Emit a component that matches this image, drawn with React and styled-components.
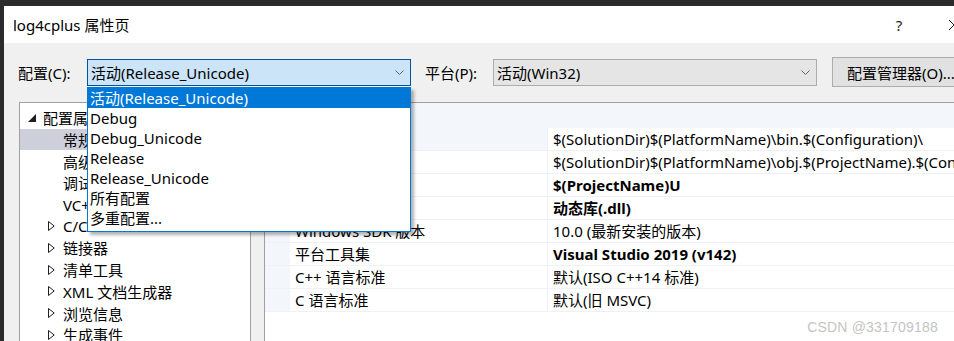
import React from "react";
import styled, { createGlobalStyle } from "styled-components";

const FONT = `"Noto Sans", "Noto Sans CJK SC", sans-serif`;

const CONFIGS = [
  "活动(Release_Unicode)",
  "Debug",
  "Debug_Unicode",
  "Release",
  "Release_Unicode",
  "所有配置",
  "多重配置...",
];

const TREE = [
  { label: "配置属性", depth: 0, open: true },
  { label: "常规", depth: 1, selected: true },
  { label: "高级", depth: 1 },
  { label: "调试", depth: 1 },
  { label: "VC++ 目录", depth: 1 },
  { label: "C/C++", depth: 1, closed: true },
  { label: "链接器", depth: 1, closed: true },
  { label: "清单工具", depth: 1, closed: true },
  { label: "XML 文档生成器", depth: 1, closed: true },
  { label: "浏览信息", depth: 1, closed: true },
  { label: "生成事件", depth: 1, closed: true },
];

const PROPS = [
  { name: "输出目录", value: "$(SolutionDir)$(PlatformName)\\bin.$(Configuration)\\", active: true },
  { name: "中间目录", value: "$(SolutionDir)$(PlatformName)\\obj.$(ProjectName).$(Configuration)\\" },
  { name: "目标文件名", value: "$(ProjectName)U", bold: true },
  { name: "配置类型", value: "动态库(.dll)", bold: true },
  { name: "Windows SDK 版本", value: "10.0 (最新安装的版本)" },
  { name: "平台工具集", value: "Visual Studio 2019 (v142)", bold: true },
  { name: "C++ 语言标准", value: "默认(ISO C++14 标准)" },
  { name: "C 语言标准", value: "默认(旧 MSVC)" },
];

const GlobalStyle = createGlobalStyle`
  html, body {
    margin: 0;
    padding: 0;
    background: #2b2b2b;
    overflow: hidden;
  }
  * { box-sizing: border-box; }
`;

const Window = styled.div`
  margin: 6px 0 0 4px;
  height: 335px;
  display: flex;
  flex-direction: column;
  font-family: ${FONT};
  font-size: 15px;
  color: #000;
  overflow: hidden;
  position: relative;
`;

const TitleBar = styled.div`
  height: 37px;
  flex: none;
  background: #fff;
  display: flex;
  align-items: center;
  padding-left: 9px;
`;

const Title = styled.span`
  flex: 1;
  font-size: 15px;
`;

const TitleBtn = styled.span`
  width: 94px;
  text-align: center;
  font-size: 15px;
  color: #1b1b1b;
`;

const CloseBtn = styled.span`
  width: 8px;
  display: flex;
  align-items: center;
  padding-left: 2px;
  overflow: hidden;
`;

const Body = styled.div`
  flex: 1;
  background: #f0f0f0;
  display: flex;
  flex-direction: column;
  min-height: 0;
`;

const ConfigRow = styled.div`
  display: flex;
  align-items: center;
  height: 44px;
  padding: 14px 0 0 14px;
  flex: none;
`;

const Label = styled.span`
  width: ${(p) => p.$w}px;
  padding-left: ${(p) => p.$pad || 0}px;
  flex: none;
  white-space: nowrap;
`;

const ComboWrap = styled.div`
  position: relative;
  flex: none;
`;

const Combo = styled.div`
  width: 324px;
  height: 27px;
  display: flex;
  align-items: center;
  padding: 0 6px 0 3px;
  background: ${(p) => (p.$open ? "#cce4f7" : "#e5e5e5")};
  border: 1px solid ${(p) => (p.$open ? "#005499" : "#adadad")};
  white-space: nowrap;
`;

const ComboText = styled.span`
  flex: 1;
`;

const DropList = styled.div`
  position: absolute;
  left: 0;
  top: 28px;
  width: 324px;
  background: #fff;
  border: 1px solid #0078d7;
  box-shadow: 3px 3px 3px rgba(0, 0, 0, 0.3);
  z-index: 5;
  padding-bottom: 3px;
`;

const DropItem = styled.div`
  height: 20px;
  line-height: 20px;
  padding-left: 2px;
  background: ${(p) => (p.$active ? "#0078d7" : "transparent")};
  color: ${(p) => (p.$active ? "#fff" : "#000")};
  white-space: nowrap;
`;

const Button = styled.div`
  margin-left: 15px;
  width: 140px;
  height: 30px;
  flex: none;
  background: #e1e1e1;
  border: 1px solid #adadad;
  border-right: none;
  display: flex;
  align-items: center;
  padding-left: 14px;
  white-space: nowrap;
`;

const Main = styled.div`
  flex: 1;
  display: flex;
  margin: 15px 0 0 15px;
  min-height: 0;
`;

const Tree = styled.div`
  width: 232px;
  flex: none;
  background: #fff;
  border: 1px solid #a0a0a0;
  border-bottom: none;
  padding-top: 4px;
`;

const TreeRow = styled.div`
  height: 21.7px;
  display: flex;
  align-items: center;
  padding-left: ${(p) => (p.$depth === 0 ? 8 : 28)}px;
  background: ${(p) => (p.$selected ? "#cdd0db" : "transparent")};
  white-space: nowrap;
`;

const Expander = styled.span`
  width: 15px;
  flex: none;
  display: flex;
  align-items: center;
`;

const Grid = styled.div`
  flex: 1;
  margin-left: 13px;
  background: #fff;
  border-top: 1px solid #a0a0a0;
  border-left: 1px solid #a0a0a0;
  overflow: hidden;
`;

const GridHeader = styled.div`
  height: 25px;
  background: #f3f6fb;
`;

const GridRow = styled.div`
  display: flex;
  height: 23px;
  border-bottom: 1px solid #eef1f6;
  white-space: nowrap;
`;

const Gutter = styled.div`
  width: 25px;
  flex: none;
  background: #f3f6fb;
`;

const NameCell = styled.div`
  width: 257px;
  flex: none;
  padding-left: 5px;
  line-height: 22px;
  background: ${(p) => (p.$active ? "#f3f6fb" : "transparent")};
`;

const ValueCell = styled.div`
  flex: 1;
  padding-left: 5px;
  line-height: 22px;
  border-left: 1px solid #eef1f6;
  font-weight: ${(p) => (p.$bold ? 700 : 400)};
`;

const Watermark = styled.div`
  position: absolute;
  right: 16px;
  bottom: 6px;
  font-family: "Liberation Sans", sans-serif;
  font-size: 14px;
  color: #c4c4c4;
  letter-spacing: 0.2px;
`;

const Chevron = () => (
  <svg width="9" height="5" viewBox="0 0 9 5">
    <polyline points="0.5,0.5 4.5,4.5 8.5,0.5" fill="none" stroke="#606060" strokeWidth="1" />
  </svg>
);

const OpenGlyph = () => (
  <svg width="8" height="8" viewBox="0 0 8 8">
    <polygon points="8,0 8,8 0,8" fill="#1e1e1e" />
  </svg>
);

const ClosedGlyph = () => (
  <svg width="7" height="10" viewBox="0 0 7 10">
    <polygon points="0.5,0.5 6.2,5 0.5,9.5" fill="none" stroke="#1e1e1e" strokeWidth="1" />
  </svg>
);

export default function App() {
  return (
    <>
      <GlobalStyle />
      <Window>
        <TitleBar>
          <Title>log4cplus 属性页</Title>
          <TitleBtn>?</TitleBtn>
          <CloseBtn>
            <svg width="12" height="12" viewBox="0 0 12 12" style={{ flex: "none" }}>
              <path d="M1 1 L11 11 M11 1 L1 11" stroke="#1b1b1b" strokeWidth="1" />
            </svg>
          </CloseBtn>
        </TitleBar>
        <Body>
          <ConfigRow>
            <Label $w={69}>配置(C):</Label>
            <ComboWrap>
              <Combo $open>
                <ComboText>活动(Release_Unicode)</ComboText>
                <Chevron />
              </Combo>
              <DropList>
                {CONFIGS.map((c, i) => (
                  <DropItem key={c} $active={i === 0}>
                    {c}
                  </DropItem>
                ))}
              </DropList>
            </ComboWrap>
            <Label $w={82} $pad={14}>平台(P):</Label>
            <ComboWrap>
              <Combo>
                <ComboText>活动(Win32)</ComboText>
                <Chevron />
              </Combo>
            </ComboWrap>
            <Button>配置管理器(O)...</Button>
          </ConfigRow>
          <Main>
            <Tree>
              {TREE.map((t) => (
                <TreeRow key={t.label} $depth={t.depth} $selected={t.selected}>
                  <Expander>
                    {t.open && <OpenGlyph />}
                    {t.closed && <ClosedGlyph />}
                  </Expander>
                  {t.label}
                </TreeRow>
              ))}
            </Tree>
            <Grid>
              <GridHeader />
              {PROPS.map((p) => (
                <GridRow key={p.name}>
                  <Gutter />
                  <NameCell $active={p.active}>{p.name}</NameCell>
                  <ValueCell $bold={p.bold}>{p.value}</ValueCell>
                </GridRow>
              ))}
            </Grid>
          </Main>
        </Body>
        <Watermark>CSDN @331709188</Watermark>
      </Window>
    </>
  );
}
